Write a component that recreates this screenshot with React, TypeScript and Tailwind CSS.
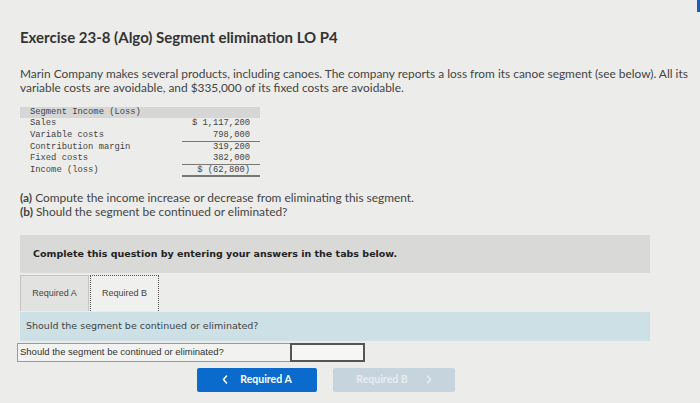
import React from "react";

const mono = { fontFamily: '"Liberation Mono", "DejaVu Sans Mono", monospace' };

function Chevron({ dir, color }: { dir: "left" | "right"; color: string }) {
  return (
    <svg width="6" height="9" viewBox="0 0 6 9" fill="none">
      <path
        d={dir === "left" ? "M4.5 1 L1.5 4.5 L4.5 8" : "M1.5 1 L4.5 4.5 L1.5 8"}
        stroke={color}
        strokeWidth="1.6"
        strokeLinecap="round"
        strokeLinejoin="round"
      />
    </svg>
  );
}

export default function App() {
  const rows: [string, string, string][] = [
    ["Sales", "$ 1,117,200", ""],
    ["Variable costs", "798,000", "single"],
    ["Contribution margin", "319,200", ""],
    ["Fixed costs", "382,000", "single"],
    ["Income (loss)", "$ (62,800)", "total"],
  ];
  return (
    <div
      className="relative w-[700px] h-[403px] overflow-hidden bg-[#ececea] text-[#3a3a3a]"
      style={{ fontFamily: 'Lato, "Open Sans", sans-serif' }}
    >
      <div className="absolute right-0 top-0 w-[3px] h-[12px] bg-[#1a5fb8]" />
      <div className="flex flex-col pl-[20px] pr-[10px] pt-[27px]">
        <h1 className="text-[15px] leading-[20px] font-bold text-[#333]">
          Exercise 23-8 (Algo) Segment elimination LO P4
        </h1>
        <p className="mt-[20px] text-[11.9px] leading-[14px] text-[#444] w-[680px]">
          Marin Company makes several products, including canoes. The company reports a loss from its canoe segment (see below). All its
          <br />
          variable costs are avoidable, and $335,000 of its fixed costs are avoidable.
        </p>
        <div className="mt-[12px] w-[240px] text-[8.8px] text-[#444]" style={mono}>
          <div className="h-[11px] leading-[11px] bg-[#d6d6d6] pl-[10px]">Segment Income (Loss)</div>
          {rows.map(([l, v, line]) => (
            <div key={l} className="flex h-[11.8px] leading-[11.8px]">
              <div className="w-[162px] pl-[10px]">{l}</div>
              <div
                className={
                  "w-[78px] text-right pr-[10px] " +
                  (line === "single"
                    ? "border-b border-[#777]"
                    : line === "total"
                    ? "border-b-2 border-[#777]"
                    : "")
                }
              >
                {v}
              </div>
            </div>
          ))}
        </div>
        <div className="mt-[14px] text-[11.9px] leading-[14px] text-[#444]">
          <div>
            <span className="font-bold">(a)</span> Compute the income increase or decrease from eliminating this segment.
          </div>
          <div>
            <span className="font-bold">(b)</span> Should the segment be continued or eliminated?
          </div>
        </div>
        <div
          className="mt-[16px] w-[630px] h-[38px] bg-[#d9d9d8] flex items-center pl-[13px] text-[9.5px] font-bold text-[#222]"
          style={{ fontFamily: '"DejaVu Sans", Verdana, sans-serif' }}
        >
          Complete this question by entering your answers in the tabs below.
        </div>
        <div
          className="mt-[2px] flex gap-[1px] text-[9px] text-[#444]"
          style={{ fontFamily: '"Liberation Sans", Arial, sans-serif' }}
        >
          <div className="w-[69px] h-[36px] bg-[#e2e2e1] border border-[#c4c4c4] border-b-0 flex items-center justify-center">
            Required A
          </div>
          <div className="w-[69px] h-[36px] bg-[#f0f0ee] border border-dotted border-[#555] border-b-0 flex items-center justify-center">
            Required B
          </div>
        </div>
        <div
          className="mt-[1px] w-[630px] h-[29px] bg-[#cde0e6] flex items-center pl-[6px] text-[9.5px] text-[#444]"
          style={{ fontFamily: '"DejaVu Sans", Verdana, sans-serif' }}
        >
          Should the segment be continued or eliminated?
        </div>
        <div
          className="ml-[-3px] mt-[2px] flex w-[348px] h-[19px] border border-[#9a9a9a] bg-[#f2f2f0] text-[9.5px] text-[#333]"
          style={{ fontFamily: '"Liberation Sans", Arial, sans-serif' }}
        >
          <div className="w-[273px] pl-[2px] flex items-center border-r border-[#aaa]">
            Should the segment be continued or eliminated?
          </div>
          <div className="flex-1 border-2 border-[#555] bg-[#f6f6f4] -m-[1px]" />
        </div>
        <div className="mt-[6px] flex gap-[16px] pl-[177px]">
          <div className="w-[120px] h-[24px] rounded-[2px] bg-[#0b6bcd] flex items-center justify-center gap-[12px] text-[10.5px] font-bold text-white">
            <Chevron dir="left" color="#ffffff" />
            <span>Required A</span>
          </div>
          <div className="w-[122px] h-[24px] rounded-[2px] bg-[#c6d4de] flex items-center justify-center gap-[18px] text-[10.5px] font-bold text-[#e6edf2]">
            <span>Required B</span>
            <Chevron dir="right" color="#e6edf2" />
          </div>
        </div>
      </div>
    </div>
  );
}
